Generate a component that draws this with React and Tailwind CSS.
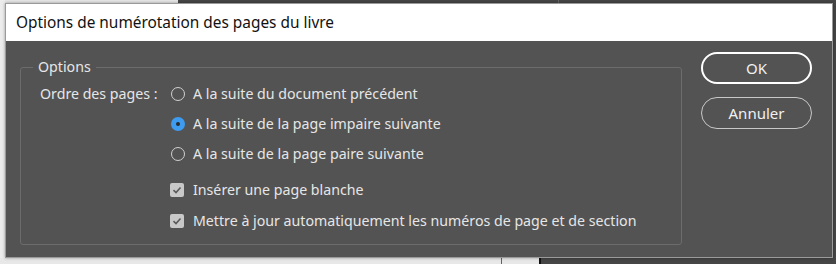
import React from "react";

function Radio({ checked }) {
  if (checked) {
    return (
      <span className="w-[14px] h-[14px] rounded-full bg-[#3d9bf0] flex items-center justify-center shrink-0">
        <span className="w-[4px] h-[4px] rounded-full bg-[#2a2a2a]" />
      </span>
    );
  }
  return <span className="w-[14px] h-[14px] rounded-full border border-[#d0d0d0] shrink-0" />;
}

function Check() {
  return (
    <span className="w-[14px] h-[14px] rounded-[2px] bg-[#c8c8c8] flex items-center justify-center shrink-0">
      <svg width="10" height="10" viewBox="0 0 10 10">
        <path d="M1.5 5.2 L4 7.5 L8.5 2.5" fill="none" stroke="#5a5a5a" strokeWidth="1.6" />
      </svg>
    </span>
  );
}

export default function App() {
  const font = { fontFamily: '"Noto Sans", "Open Sans", sans-serif' };
  return (
    <div className="relative w-[836px] h-[264px] overflow-hidden bg-[#464646]" style={font}>
      {/* desktop behind */}
      <div className="absolute left-0 top-0 w-[178px] h-[3px] bg-[#e6e6e6]" />
      <div className="absolute left-0 top-0 w-[5px] h-[264px] bg-[#ececec]" />
      <div className="absolute left-0 top-[258px] w-[540px] h-[6px] bg-[#e8e8e8]" />
      <div className="absolute left-[501px] top-[258px] w-[1px] h-[6px] bg-[#8a3cc8]" />
      <div className="absolute left-[539px] top-[258px] w-[2px] h-[6px] bg-[#111]" />
      <div className="absolute left-[558px] top-0 w-[1px] h-[3px] bg-[#666]" />

      {/* dialog */}
      <div className="absolute left-[5px] top-[3px] w-[828px] h-[255px] flex flex-col shadow-[0_0_3px_rgba(0,0,0,0.35)] border border-[#9a9a9a]">
        <div className="h-[37px] bg-white flex items-center pl-[10px] text-[15.4px] text-[#111]">
          Options de numérotation des pages du livre
        </div>
        <div className="flex-1 bg-[#535353] flex pl-[14px] pt-[26px] pr-[20px] text-[#e6e6e6] text-[14.2px]">
          <div className="relative w-[662px] h-[178px] border border-[#6c6c6c] rounded-[3px]">
            <div className="absolute left-[12px] -top-[11px] px-[5px] bg-[#535353] leading-[20px]">Options</div>
            <div className="flex pt-[16px] pl-[19px]">
              <div className="w-[131px] leading-[20px]">Ordre des pages :</div>
              <div className="flex flex-col gap-[10px]">
                <div className="flex items-center gap-[8px] leading-[20px]"><Radio />A la suite du document précédent</div>
                <div className="flex items-center gap-[8px] leading-[20px]"><Radio checked />A la suite de la page impaire suivante</div>
                <div className="flex items-center gap-[8px] leading-[20px]"><Radio />A la suite de la page paire suivante</div>
              </div>
            </div>
            <div className="flex flex-col gap-[11px] pl-[149px] pt-[16px]">
              <div className="flex items-center gap-[9px] leading-[20px]"><Check />Insérer une page blanche</div>
              <div className="flex items-center gap-[9px] leading-[20px]"><Check />Mettre à jour automatiquement les numéros de page et de section</div>
            </div>
          </div>
          <div className="ml-auto flex flex-col gap-[13px] -mt-[15px]">
            <button className="w-[111px] h-[32px] rounded-[16px] border-2 border-white text-[15px] text-[#f0f0f0]">OK</button>
            <button className="w-[111px] h-[32px] rounded-[16px] border border-[#c8c8c8] text-[15px] text-[#f0f0f0]">Annuler</button>
          </div>
        </div>
      </div>
    </div>
  );
}
